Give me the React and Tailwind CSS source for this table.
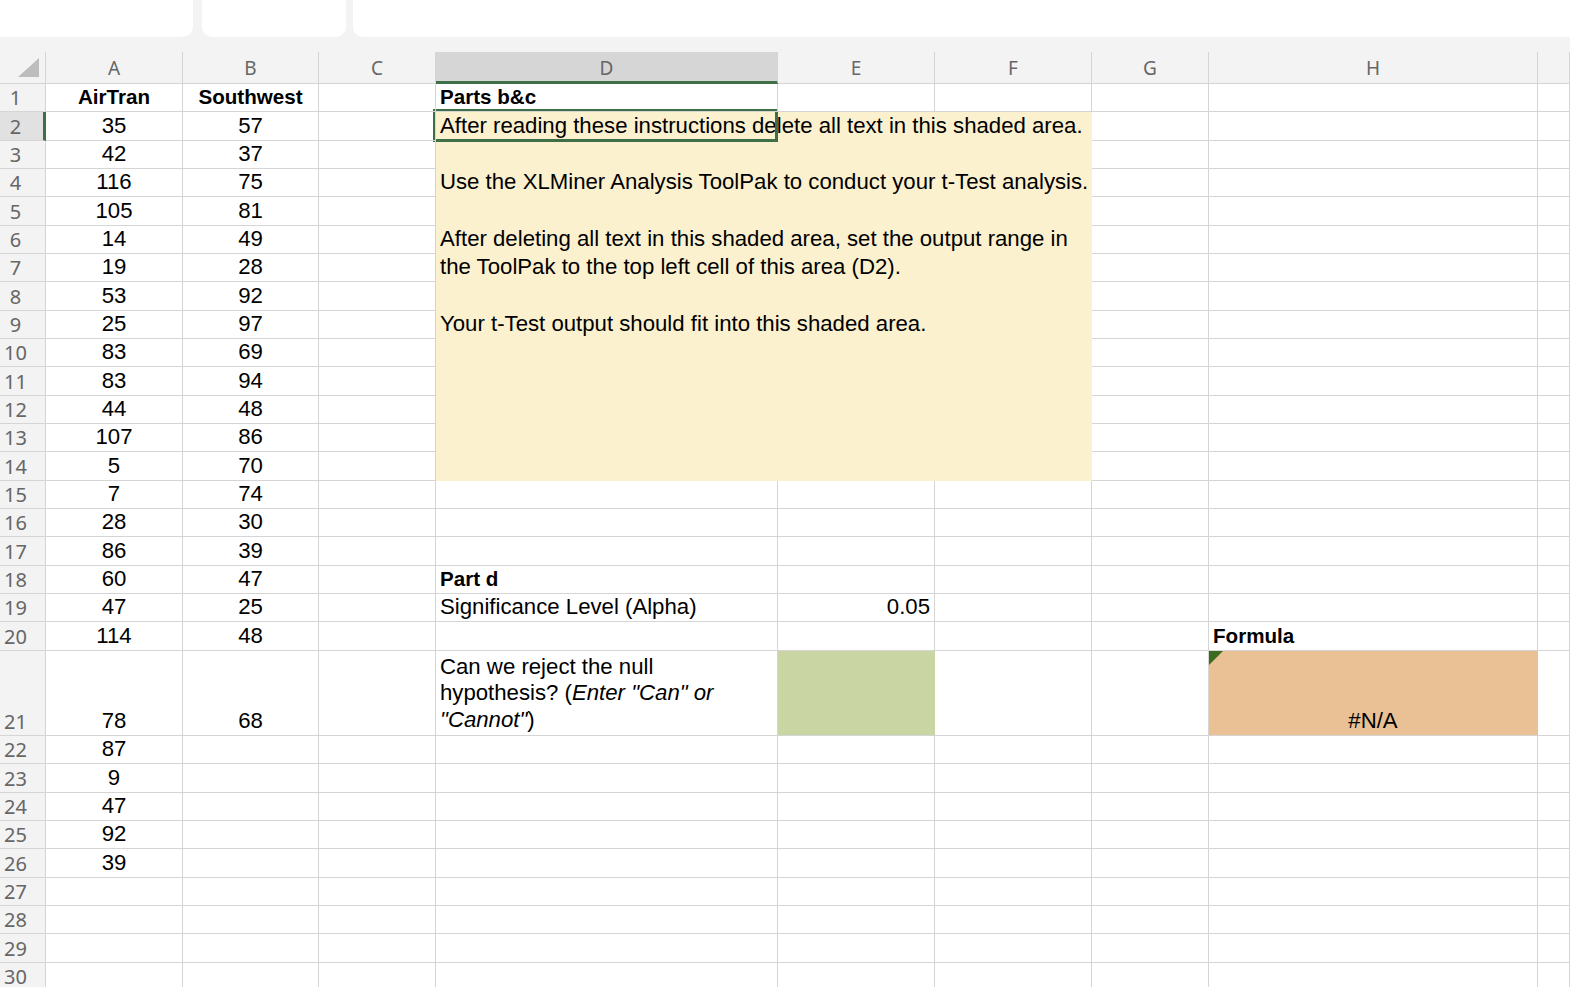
import React from "react";

const colA = ["AirTran", "35", "42", "116", "105", "14", "19", "53", "25", "83", "83", "44", "107", "5", "7", "28", "86", "60", "47", "114", "78", "87", "9", "47", "92", "39"];
const colB = ["Southwest", "57", "37", "75", "81", "49", "28", "92", "97", "69", "94", "48", "86", "70", "74", "30", "39", "47", "25", "48", "68"];

const baseFont = "font-[family-name:Liberation_Sans,Arial,sans-serif] leading-[24px] text-black";
const headFont = "font-[family-name:Noto_Sans,Open_Sans,sans-serif] leading-[24px] text-[#666666]";

function Cell({ children, className = "", bold = false }) {
  return (
    <div
      className={`relative flex items-end border-r border-b border-[#d5d5d5] px-[4px] pb-[2px] whitespace-nowrap ${baseFont} ${
        bold ? "font-bold text-[20.6px]" : "text-[22.2px]"
      } ${className}`}
    >
      {children}
    </div>
  );
}

function cellFor(r, c) {
  const k = `${r}-${c}`;
  if (c === 1 && colA[r - 1] !== undefined) {
    return <Cell key={k} bold={r === 1} className="justify-center">{colA[r - 1]}</Cell>;
  }
  if (c === 2 && colB[r - 1] !== undefined) {
    return <Cell key={k} bold={r === 1} className="justify-center">{colB[r - 1]}</Cell>;
  }
  if (c === 4 && r === 1) return <Cell key={k} bold>Parts b&amp;c</Cell>;
  if (c === 4 && r === 18) return <Cell key={k} bold>Part d</Cell>;
  if (c === 4 && r === 19) return <Cell key={k}>Significance Level (Alpha)</Cell>;
  if (c === 5 && r === 19) return <Cell key={k} className="justify-end">0.05</Cell>;
  if (c === 8 && r === 20) return <Cell key={k} bold>Formula</Cell>;
  if (c === 4 && r === 21)
    return (
      <Cell key={k}>
        <div className="leading-[26.5px]">
          Can we reject the null
          <br />
          hypothesis? (<span className="italic">Enter "Can" or</span>
          <br />
          <span className="italic">"Cannot"</span>)
        </div>
      </Cell>
    );
  if (c === 5 && r === 21) return <Cell key={k} className="bg-[#c9d6a3] border-r-[#c9d6a3]" />;
  if (c === 8 && r === 21)
    return (
      <Cell key={k} className="justify-center bg-[#eac195] border-r-[#eac195]">
        <svg className="absolute left-0 top-0" width="14" height="14" viewBox="0 0 14 14">
          <polygon points="0,0 14,0 0,14" fill="#3a6b21" />
        </svg>
        #N/A
      </Cell>
    );
  return <Cell key={k} />;
}

const blockRows = [
  "After reading these instructions delete all text in this shaded area.",
  "",
  "Use the XLMiner Analysis ToolPak to conduct your t-Test analysis.",
  "",
  "After deleting all text in this shaded area, set the output range in",
  "the ToolPak to the top left cell of this area (D2).",
  "",
  "Your t-Test output should fit into this shaded area.",
];

export default function App() {
  const cells = [];

  cells.push(
    <div key="corner" className="relative border-r border-b border-[#d5d5d5] bg-[#f3f3f3]">
      <svg className="absolute left-[18px] top-[6px]" width="21" height="19" viewBox="0 0 21 19">
        <polygon points="21,0 21,19 0,19" fill="#bdbdbd" />
      </svg>
    </div>
  );
  const letters = ["A", "B", "C", "D", "E", "F", "G", "H", ""];
  letters.forEach((l, i) => {
    if (l === "D") {
      cells.push(
        <div key={`h-${i}`} className={`flex items-center justify-center bg-[#d6d6d6] border-r border-[#d5d5d5] border-b-[3px] border-b-[#3e6f47] pt-[3px] text-[19px] ${headFont} text-[#3e6f47]`}>
          {l}
        </div>
      );
    } else {
      cells.push(
        <div key={`h-${i}`} className={`flex items-center justify-center bg-[#f3f3f3] border-r border-b border-[#d5d5d5] pt-[1px] text-[19px] ${headFont}`}>
          {l}
        </div>
      );
    }
  });

  cells.push(
    <div key="block" className="relative col-start-5 col-span-3 row-start-3 row-span-13 bg-[#fbf1cf]">
      <div className="grid grid-rows-[29px_28px_28px_29px_28px_28px_29px_28px]">
        {blockRows.map((t, i) => (
          <div key={i} className={`flex items-end px-[4px] pb-[3px] whitespace-nowrap text-[22.2px] ${baseFont}`}>
            {t}
          </div>
        ))}
      </div>
      <div className="absolute left-[-3px] top-[-3px] w-[345px] h-[33px] border-[3px] border-[#3e6f47]" />
    </div>
  );

  for (let r = 1; r <= 30; r++) {
    const selected = r === 2;
    cells.push(
      <div
        key={`rh-${r}`}
        className={`flex items-end pb-[1px] border-b border-[#d5d5d5] text-[20px] ${headFont} ${
          selected ? "bg-[#e1e1e1] border-r-[3px] border-r-[#3e6f47] text-[#3e6f47]" : "bg-[#f3f3f3] border-r"
        }`}
      >
        <span className="w-[31px] text-center">{r}</span>
      </div>
    );
    for (let c = 1; c <= 9; c++) {
      if (r >= 2 && r <= 14 && c >= 4 && c <= 6) continue;
      cells.push(cellFor(r, c));
    }
  }

  return (
    <div className="w-[1570px] h-[987px] overflow-hidden bg-white">
      <div className="h-[52px] bg-[#f3f3f3] flex">
        <div className="w-[193px] h-[37px] bg-white rounded-br-[10px]" />
        <div className="ml-[9px] w-[144px] h-[37px] bg-white rounded-b-[10px]" />
        <div className="ml-[7px] flex-1 h-[37px] bg-white rounded-bl-[10px]" />
      </div>
      <div className="grid grid-cols-[46px_137px_136px_117px_342px_157px_157px_117px_329px_1fr] grid-rows-[32px_28px_29px_28px_28px_29px_28px_28px_29px_28px_28px_29px_28px_28px_29px_28px_28px_29px_28px_28px_29px_85px_28px_29px_28px_28px_29px_28px_28px_29px_28px]">
        {cells}
      </div>
    </div>
  );
}
